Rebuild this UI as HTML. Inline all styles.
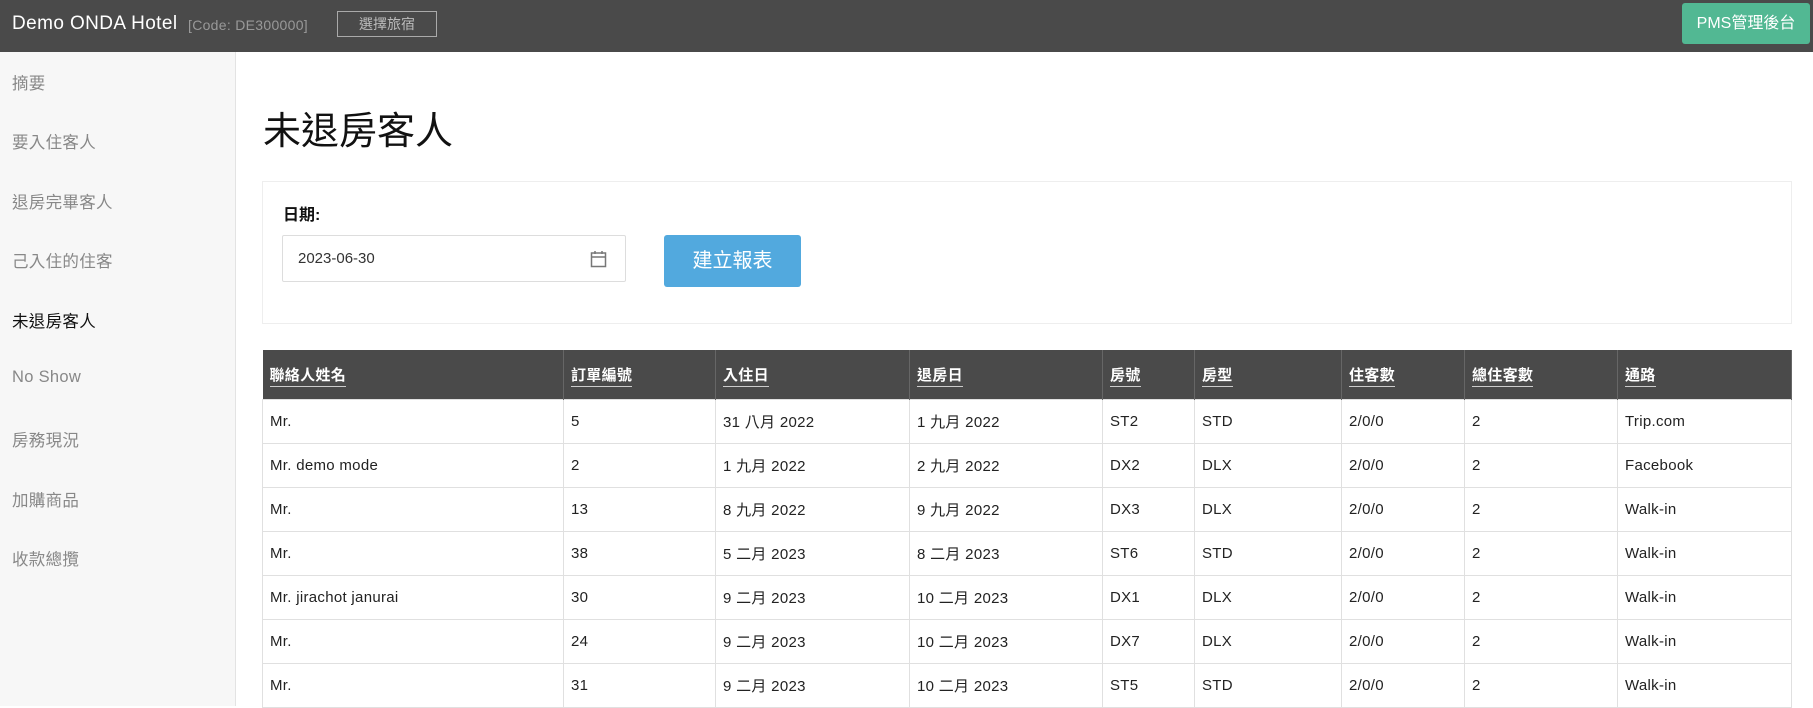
<!DOCTYPE html>
<html><head><meta charset="utf-8"><style>
*{box-sizing:border-box;margin:0;padding:0}
body{width:1813px;height:706px;overflow:hidden;background:#fff;font-family:"Liberation Sans","Noto Sans CJK TC",sans-serif;position:relative}
.top{position:absolute;left:0;top:0;width:1813px;height:52px;background:#4a4a4a}
.brand{position:absolute;left:12px;top:13px;color:#fff;font-size:19px;letter-spacing:0.4px}
.code{position:absolute;left:188px;top:17px;color:#999;font-size:14px;letter-spacing:0.3px}
.sel{position:absolute;left:337px;top:11px;width:100px;height:26px;border:1px solid #aaa;color:#bbb;font-size:14px;text-align:center;line-height:24px}
.pms{position:absolute;left:1682px;top:3px;width:128px;height:41px;background:#52b893;border-radius:3px;color:#fff;font-size:16px;text-align:center;line-height:41px}
.side{position:absolute;left:0;top:52px;width:236px;height:654px;background:#f7f7f7;border-right:1px solid #e3e3e3}
.side div{position:absolute;left:12px;font-size:16.5px;color:#888;letter-spacing:0.3px}
h1{position:absolute;left:263px;top:100px;font-size:38px;font-weight:normal;color:#111}
.panel{position:absolute;left:262px;top:181px;width:1530px;height:143px;border:1px solid #eee}
.lbl{position:absolute;left:283px;top:201px;font-size:16px;font-weight:bold;color:#111}
.inp{position:absolute;left:282px;top:235px;width:344px;height:47px;border:1px solid #ddd;border-radius:2px;font-size:15px;color:#333;padding:14px 0 0 15px}
.btn{position:absolute;left:664px;top:235px;width:137px;height:52px;background:#52a9de;border-radius:3px;color:#fff;font-size:20px;text-align:center;line-height:52px}
table{position:absolute;left:262px;top:350px;width:1530px;border-collapse:collapse;font-size:15px;color:#222;letter-spacing:0.3px}
th{background:#4a4a4a;color:#fff;height:49px;text-align:left;padding:0 7px;font-weight:bold;border-right:1px solid #666}
th span{border-bottom:1px solid #ccc;padding-bottom:2px}
td{height:44px;padding:0 7px;border:1px solid #e0e0e0}
</style></head><body>
<div class="top"><div class="brand">Demo ONDA Hotel</div><div class="code">[Code: DE300000]</div><div class="sel">選擇旅宿</div><div class="pms">PMS管理後台</div></div>
<div class="side">
<div style="top:18px">摘要</div><div style="top:77px">要入住客人</div><div style="top:137px">退房完畢客人</div><div style="top:196px">己入住的住客</div><div style="top:256px;color:#111">未退房客人</div><div style="top:316px">No Show</div><div style="top:375px">房務現況</div><div style="top:435px">加購商品</div><div style="top:494px">收款總攬</div>
</div>
<h1>未退房客人</h1>
<div class="panel"></div>
<div class="lbl">日期:</div>
<div class="inp">2023-06-30
<svg style="position:absolute;left:307px;top:14px" width="17" height="18" viewBox="0 0 17 18"><rect x="1.5" y="3" width="14" height="13.5" fill="none" stroke="#777" stroke-width="1.5"/><line x1="1.5" y1="7" x2="15.5" y2="7" stroke="#777" stroke-width="1.5"/><line x1="5" y1="1" x2="5" y2="4" stroke="#777" stroke-width="1.5"/><line x1="12" y1="1" x2="12" y2="4" stroke="#777" stroke-width="1.5"/></svg></div>
<div class="btn">建立報表</div>
<table>
<colgroup><col style="width:301px"><col style="width:152px"><col style="width:194px"><col style="width:193px"><col style="width:92px"><col style="width:147px"><col style="width:123px"><col style="width:153px"><col></colgroup>
<tr><th><span>聯絡人姓名</span></th><th><span>訂單編號</span></th><th><span>入住日</span></th><th><span>退房日</span></th><th><span>房號</span></th><th><span>房型</span></th><th><span>住客數</span></th><th><span>總住客數</span></th><th><span>通路</span></th></tr>
<tr><td>Mr.</td><td>5</td><td>31 八月 2022</td><td>1 九月 2022</td><td>ST2</td><td>STD</td><td>2/0/0</td><td>2</td><td>Trip.com</td></tr>
<tr><td>Mr. demo mode</td><td>2</td><td>1 九月 2022</td><td>2 九月 2022</td><td>DX2</td><td>DLX</td><td>2/0/0</td><td>2</td><td>Facebook</td></tr>
<tr><td>Mr.</td><td>13</td><td>8 九月 2022</td><td>9 九月 2022</td><td>DX3</td><td>DLX</td><td>2/0/0</td><td>2</td><td>Walk-in</td></tr>
<tr><td>Mr.</td><td>38</td><td>5 二月 2023</td><td>8 二月 2023</td><td>ST6</td><td>STD</td><td>2/0/0</td><td>2</td><td>Walk-in</td></tr>
<tr><td>Mr. jirachot janurai</td><td>30</td><td>9 二月 2023</td><td>10 二月 2023</td><td>DX1</td><td>DLX</td><td>2/0/0</td><td>2</td><td>Walk-in</td></tr>
<tr><td>Mr.</td><td>24</td><td>9 二月 2023</td><td>10 二月 2023</td><td>DX7</td><td>DLX</td><td>2/0/0</td><td>2</td><td>Walk-in</td></tr>
<tr><td>Mr.</td><td>31</td><td>9 二月 2023</td><td>10 二月 2023</td><td>ST5</td><td>STD</td><td>2/0/0</td><td>2</td><td>Walk-in</td></tr>
</table>
</body></html>
